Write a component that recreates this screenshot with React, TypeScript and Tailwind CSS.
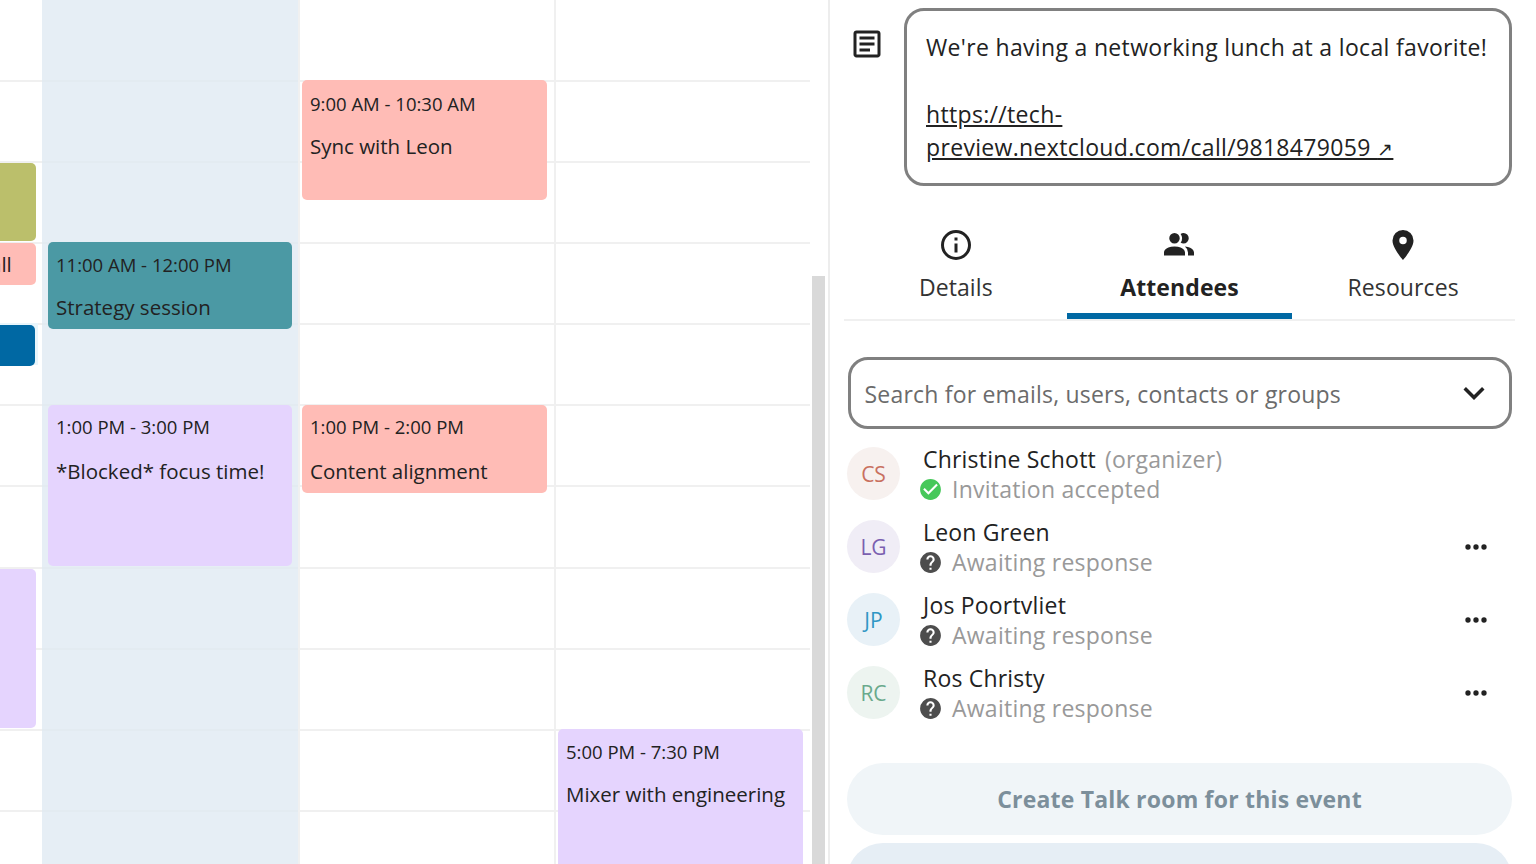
import React from 'react'

const font = "font-['Open_Sans','Noto_Sans',sans-serif]"

const mdi = {
  note: 'M5,3C3.89,3 3,3.89 3,5V19C3,20.11 3.89,21 5,21H19C20.11,21 21,20.11 21,19V5C21,3.89 20.11,3 19,3H5M5,5H19V19H5V5M7,7V9H17V7H7M7,11V13H17V11H7M7,15V17H14V15H7Z',
  info: 'M11,9H13V7H11M12,20C7.59,20 4,16.41 4,12C4,7.59 7.59,4 12,4C16.41,4 20,7.59 20,12C20,16.41 16.41,20 12,20M12,2A10,10 0 0,0 2,12A10,10 0 0,0 12,22A10,10 0 0,0 22,12A10,10 0 0,0 12,2M11,17H13V11H11V17Z',
  people: 'M16 17V19H2V17S2 13 9 13 16 17 16 17M12.5 7.5A3.5 3.5 0 1 0 9 11A3.5 3.5 0 0 0 12.5 7.5M15.94 13A5.32 5.32 0 0 1 18 17V19H22V17S22 13.37 15.94 13M15 4A3.39 3.39 0 0 0 13.07 4.59A5 5 0 0 1 13.07 10.41A3.39 3.39 0 0 0 15 11A3.5 3.5 0 0 0 15 4Z',
  pin: 'M12,11.5A2.5,2.5 0 0,1 9.5,9A2.5,2.5 0 0,1 12,6.5A2.5,2.5 0 0,1 14.5,9A2.5,2.5 0 0,1 12,11.5M12,2A7,7 0 0,0 5,9C5,14.25 12,22 12,22C12,22 19,14.25 19,9A7,7 0 0,0 12,2Z',
  chevron: 'M7.41,8.58L12,13.17L16.59,8.58L18,10L12,16L6,10L7.41,8.58Z',
  check: 'M12 2C6.5 2 2 6.5 2 12S6.5 22 12 22 22 17.5 22 12 17.5 2 12 2M10 17L5 12L6.41 10.59L10 14.17L17.59 6.58L19 8L10 17Z',
  help: 'M15.07,11.25L14.17,12.17C13.45,12.89 13,13.5 13,15H11V14.5C11,13.39 11.45,12.39 12.17,11.67L13.41,10.41C13.78,10.05 14,9.55 14,9C14,7.89 13.1,7 12,7A2,2 0 0,0 10,9H8A4,4 0 0,1 12,5A4,4 0 0,1 16,9C16,9.88 15.64,10.67 15.07,11.25M13,19H11V17H13M12,2A10,10 0 0,0 2,12C2,17.52 6.48,22 12,22C17.52,22 22,17.52 22,12C22,6.45 17.5,2 12,2Z',
  dots: 'M16,12A2,2 0 0,1 18,10A2,2 0 0,1 20,12A2,2 0 0,1 18,14A2,2 0 0,1 16,12M10,12A2,2 0 0,1 12,10A2,2 0 0,1 14,12A2,2 0 0,1 10,12M4,12A2,2 0 0,1 6,10A2,2 0 0,1 8,12A2,2 0 0,1 4,12Z',
}

const Icon = ({ d, className }: { d: string; className: string }) => (
  <svg viewBox="0 0 24 24" className={className} fill="currentColor">
    <path d={d} />
  </svg>
)

const HourLines = ({ color = 'border-[#f0f0f0]' }: { color?: string }) => (
  <>
    <div className={`h-[82px] border-b-2 box-border ${color}`} />
    {Array.from({ length: 9 }).map((_, i) => (
      <div key={i} className={`h-[81.1px] border-b-2 box-border ${color}`} />
    ))}
  </>
)

const EventCard = ({
  time,
  title,
  className,
  pad = 'pt-[9px]',
  gap = 'mt-[14px]',
}: {
  time: string
  title: string
  className: string
  pad?: string
  gap?: string
}) => (
  <div className={`absolute rounded-[5px] pl-2 text-[#222222] ${pad} ${className}`}>
    <div className="text-[18.5px] leading-[28px] whitespace-nowrap">{time}</div>
    <div className={`text-[20.5px] leading-[28px] whitespace-nowrap ${gap}`}>{title}</div>
  </div>
)

const attendees = [
  { initials: 'CS', name: 'Christine Schott', status: 'Invitation accepted', avatar: 'bg-[#f7f1ef] text-[#c9705f]', organizer: true },
  { initials: 'LG', name: 'Leon Green', status: 'Awaiting response', avatar: 'bg-[#f0edf6] text-[#7b5fb0]', organizer: false },
  { initials: 'JP', name: 'Jos Poortvliet', status: 'Awaiting response', avatar: 'bg-[#e8f1f7] text-[#2f97c4]', organizer: false },
  { initials: 'RC', name: 'Ros Christy', status: 'Awaiting response', avatar: 'bg-[#edf4f0] text-[#6aa98c]', organizer: false },
]

const tabs = [
  { label: 'Details', icon: mdi.info, active: false },
  { label: 'Attendees', icon: mdi.people, active: true },
  { label: 'Resources', icon: mdi.pin, active: false },
]

export default function App() {
  return (
    <div className={`${font} flex h-[864px] w-[1536px] overflow-hidden bg-white text-[#222222]`}>
      {/* calendar */}
      <div className="flex h-full w-[830px] shrink-0 border-r-2 border-[#ededed] box-border">
        <div className="grid h-full w-[810px] shrink-0 grid-cols-[42px_258px_256px_254px]">
          <div className="relative">
            <HourLines />
            <div className="absolute left-0 top-[163px] h-[78px] w-[36px] rounded-r-[5px] bg-[#bbbf6b]" />
            <div className="absolute left-0 top-[243px] flex h-[42px] w-[36px] items-center overflow-hidden rounded-r-[5px] bg-[#ffbcb6]">
              <span className="-ml-[10px] text-[20.5px] leading-none">all</span>
            </div>
            <div className="absolute left-0 top-[323px] h-[42px] w-[38px] bg-[#e8f5fb]" />
            <div className="absolute left-0 top-[325px] h-[41px] w-[35px] rounded-r-[5px] bg-[#0068a3]" />
            <div className="absolute left-0 top-[569px] h-[159px] w-[36px] rounded-r-[5px] bg-[#e5d4fe]" />
          </div>
          <div className="relative border-r-2 border-[#f0f0f0] bg-[#e6eef5] box-border">
            <HourLines color="border-[#e3ebf1]" />
            <EventCard time="11:00 AM - 12:00 PM" title="Strategy session" className="left-[6px] top-[242px] h-[87px] w-[244px] bg-[#4b99a4]" />
            <EventCard time="1:00 PM - 3:00 PM" title="*Blocked* focus time!" pad="pt-[8px]" gap="mt-[16px]" className="left-[6px] top-[405px] h-[161px] w-[244px] bg-[#e5d4fe]" />
          </div>
          <div className="relative border-r-2 border-[#f0f0f0] box-border">
            <HourLines />
            <EventCard time="9:00 AM - 10:30 AM" title="Sync with Leon" pad="pt-[10px]" className="left-[2px] top-[80px] h-[120px] w-[245px] bg-[#ffbcb6]" />
            <EventCard time="1:00 PM - 2:00 PM" title="Content alignment" pad="pt-[8px]" gap="mt-[16px]" className="left-[2px] top-[405px] h-[88px] w-[245px] bg-[#ffbcb6]" />
          </div>
          <div className="relative">
            <HourLines />
            <EventCard time="5:00 PM - 7:30 PM" title="Mixer with engineering" className="left-[2px] top-[729px] h-[141px] w-[245px] bg-[#e5d4fe]" />
          </div>
        </div>
        <div className="ml-[2px] mt-[276px] h-[588px] w-[13px] bg-[#d9d9d9]" />
      </div>

      {/* event sidebar */}
      <div className="flex min-w-0 flex-1 flex-col pt-2 pl-[14px] pr-[21px]">
        <div className="flex shrink-0 items-start">
          <Icon d={mdi.note} className="ml-[5px] mt-[18px] size-[36px] shrink-0 text-[#222222]" />
          <div className="ml-[19px] h-[178px] w-[608px] rounded-[20px] border-[3px] border-[#808080] pl-[19px] pt-[20px] text-[23px] leading-[33px] tracking-[0.33px] box-border">
            <div className="whitespace-nowrap">We're having a networking lunch at a local favorite!</div>
            <div className="mt-[34px] underline underline-offset-2">https://tech-</div>
            <div className="whitespace-nowrap underline underline-offset-2">
              preview.nextcloud.com/call/9818479059 <span className="text-[19px]">↗</span>
            </div>
          </div>
        </div>

        <div className="mt-[29px] grid h-[106px] shrink-0 grid-cols-3 border-b-2 border-[#f0f0f0] box-border">
          {tabs.map(tab => (
            <div key={tab.label} className={`flex flex-col items-center pt-[12px] ${tab.active ? '-mx-[1px] border-b-[6px] border-[#0068a3]' : ''}`}>
              <Icon d={tab.icon} className="size-[36px] text-[#222222]" />
              <span className={`mt-[9px] text-[23px] leading-[30px] tracking-[0.1px] ${tab.active ? 'font-bold text-[#222222]' : 'text-[#333333]'}`}>
                {tab.label}
              </span>
            </div>
          ))}
        </div>

        <div className="ml-[4px] mt-[36px] flex h-[72px] w-[664px] shrink-0 items-center justify-between rounded-[20px] border-[3px] border-[#808080] pl-[13.5px] pr-[14px] box-border">
          <span className="pt-[2px] text-[23px] tracking-[0.2px] text-[#6b6b6b]">Search for emails, users, contacts or groups</span>
          <Icon d={mdi.chevron} className="-mt-[1px] size-[42px] text-[#222222]" />
        </div>

        <div className="ml-[3px] mt-[18px] flex w-[665px] shrink-0 flex-col gap-[20px]">
          {attendees.map(a => (
            <div key={a.initials} className="flex h-[53px] items-center">
              <div className={`flex size-[53px] shrink-0 items-center justify-center rounded-full pt-[2px] text-[21px] ${a.avatar}`}>{a.initials}</div>
              <div className="ml-[23px] flex min-w-0 flex-1 flex-col pt-[1px]">
                <div className="flex items-baseline gap-[9px] text-[23px] leading-[30px] tracking-[0.2px]">
                  <span>{a.name}</span>
                  {a.organizer && <span className="text-[#999999]">(organizer)</span>}
                </div>
                <div className="-ml-[5px] flex items-center text-[#999999]">
                  <Icon d={a.organizer ? mdi.check : mdi.help} className={`size-[25px] ${a.organizer ? 'text-[#46c85a]' : 'text-[#4d4d4d]'}`} />
                  <span className="ml-[9px] text-[23px] leading-[30px] tracking-[0.25px]">{a.status}</span>
                </div>
              </div>
              {!a.organizer && <Icon d={mdi.dots} className="mr-[20px] size-[32px] text-[#222222]" />}
            </div>
          ))}
        </div>

        <div className="ml-[3px] mt-[44px] flex h-[72px] w-[665px] shrink-0 items-center justify-center rounded-full bg-[#f0f5f8] text-[23px] font-bold tracking-[0.2px] text-[#7c8f9b]">
          Create Talk room for this event
        </div>
        <div className="ml-[3px] mt-[8px] h-[72px] w-[665px] shrink-0 rounded-full bg-[#e6eef5]" />
      </div>
    </div>
  )
}
